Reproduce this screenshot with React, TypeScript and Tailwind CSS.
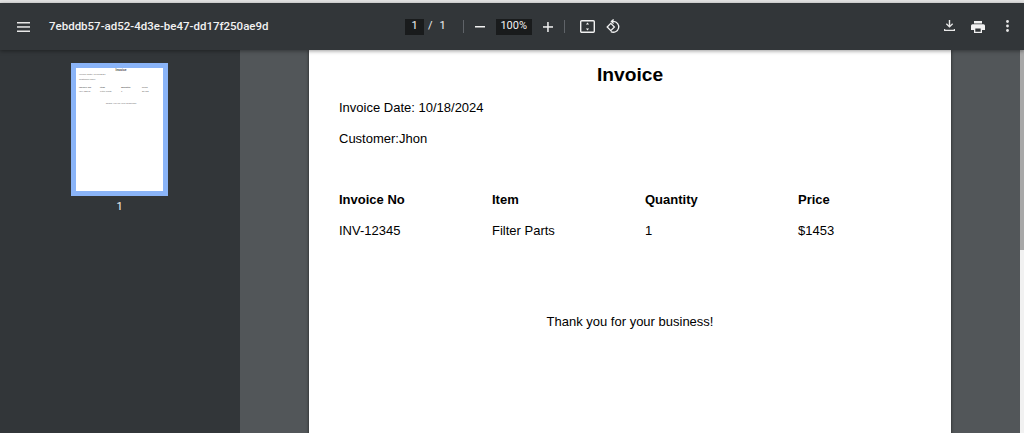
import React from "react";

const Row = ({ cells, bold }: { cells: string[]; bold?: boolean }) => (
  <div className={`flex ${bold ? "font-bold" : ""}`}>
    {cells.map((c) => (
      <div key={c} className="w-[153px]">{c}</div>
    ))}
  </div>
);

export default function App() {
  return (
    <div className="w-[1024px] h-[433px] overflow-hidden flex flex-col bg-[#525659] font-['Liberation_Sans',sans-serif]">
      <div className="h-[3px] shrink-0 bg-[#e4e4e4]" />
      <header className="relative z-10 h-[47px] shrink-0 flex items-center bg-[#323639] text-[#f1f1f1] shadow-[0_1px_4px_rgba(0,0,0,0.4)]">
        <svg className="ml-[17px] w-[13px] h-[10px]" viewBox="0 0 13 10" fill="#e8e8e8">
          <rect y="0" width="13" height="1.5" />
          <rect y="4.2" width="13" height="1.5" />
          <rect y="8.5" width="13" height="1.5" />
        </svg>
        <div className="ml-[19px] w-[356px] text-[11.5px] font-medium font-['Roboto',sans-serif]">7ebddb57-ad52-4d3e-be47-dd17f250ae9d</div>
        <div className="flex items-center text-[11px] font-['Roboto',sans-serif]">
          <div className="w-[19px] h-[16px] bg-[#191b1c] flex items-center justify-center">1</div>
          <span className="ml-[4px]">/</span>
          <span className="ml-[7px]">1</span>
          <div className="ml-[17px] w-px h-[13px] bg-[#5f6368]" />
          <svg className="ml-[11px] w-[10px] h-[2px]" viewBox="0 0 10 2" fill="#f1f1f1"><rect width="10" height="1.5" /></svg>
          <div className="ml-[11px] w-[36px] h-[16px] bg-[#191b1c] flex items-center justify-center">100%</div>
          <svg className="ml-[11px] w-[10px] h-[10px]" viewBox="0 0 10 10" fill="#f1f1f1"><rect y="4.2" width="10" height="1.5" /><rect x="4.2" width="1.5" height="10" /></svg>
          <div className="ml-[11px] w-px h-[13px] bg-[#5f6368]" />
          <svg className="ml-[15px] w-[15px] h-[13px]" viewBox="0 0 15 13" fill="none" stroke="#f1f1f1" strokeWidth="1.4">
            <rect x="0.7" y="0.7" width="13.6" height="11.6" rx="1" />
            <path d="M7.5 2.6l-1.6 2h3.2zM7.5 10.4l-1.6-2h3.2z" fill="#f1f1f1" stroke="none" />
          </svg>
          <svg className="ml-[11px] w-[15px] h-[15px]" viewBox="0 0 15 15" fill="none" stroke="#f1f1f1" strokeWidth="1.3">
            <path d="M1.2 8l3.6-3.6L8.4 8l-3.6 3.6z" />
            <path d="M5.5 2.4h2a5.4 5.4 0 1 1-2.6 10.2" />
            <path d="M7.6 0.4L5.4 2.4l2.2 2" />
          </svg>
        </div>
        <svg className="absolute left-[944px] top-[17px] w-[11px] h-[11px]" viewBox="0 0 11 11" fill="#e8e8e8">
          <path d="M4.8 0h1.4v5.2l2-1.9.9.9-3.6 3.5-3.6-3.5.9-.9 2 1.9zM0 9h1.2v.8h8.6V9H11v2H0z" />
        </svg>
        <svg className="absolute left-[971px] top-[18px] w-[14px] h-[12px]" viewBox="0 0 14 12" fill="#f1f1f1">
          <path fillRule="evenodd" d="M3 0h8v2.6H3zM1.5 3.2h11A1.5 1.5 0 0 1 14 4.7V9h-3v3H3V9H0V4.7a1.5 1.5 0 0 1 1.5-1.5zM4.3 7.4v3.4h5.4V7.4z" />
        </svg>
        <svg className="absolute left-[1006px] top-[17px] w-[3px] h-[12px]" viewBox="0 0 3 12" fill="#e8e8e8">
          <circle cx="1.5" cy="1.5" r="1.4" /><circle cx="1.5" cy="6" r="1.4" /><circle cx="1.5" cy="10.5" r="1.4" />
        </svg>
      </header>
      <div className="flex-1 min-h-0 flex">
        <aside className="w-[240px] shrink-0 bg-[#323639] flex flex-col items-center pt-[13px] pr-px">
          <div className="w-[97px] h-[133px] bg-[#8ab4f8] p-[5px]">
            <div className="w-full h-full bg-white pt-[1px] pl-[3px] text-[2.4px] leading-[3px] text-[#666]">
              <div className="text-center font-bold text-[3.2px] text-[#444]">Invoice</div>
              <div className="mt-[1px]">Invoice Date: 10/18/2024</div>
              <div className="mt-[1.5px]">Customer:Jhon</div>
              <div className="mt-[5.5px] flex font-bold"><span className="w-[21px]">Invoice No</span><span className="w-[21px]">Item</span><span className="w-[21px]">Quantity</span><span>Price</span></div>
              <div className="mt-[1px] flex"><span className="w-[21px]">INV-12345</span><span className="w-[21px]">Filter Parts</span><span className="w-[21px]">1</span><span>$1453</span></div>
              <div className="mt-[9px] text-center">Thank you for your business!</div>
            </div>
          </div>
          <div className="mt-[3px] text-[11px] text-[#f1f1f1] font-['Roboto',sans-serif]">1</div>
        </aside>
        <main className="flex-1 min-w-0 pl-[69px]">
          <div className="relative w-[642px] h-[500px] bg-white shadow-[0_0_3px_rgba(0,0,0,0.6)] pl-[30px] text-[13px] text-black leading-[16px]">
            <div className="pr-[30px] pt-[13px] text-center text-[19.2px] leading-[23px] font-bold">Invoice</div>
            <div className="mt-[14px]">Invoice Date: 10/18/2024</div>
            <div className="mt-[15px]">Customer:Jhon</div>
            <div className="mt-[45px]"><Row bold cells={["Invoice No", "Item", "Quantity", "Price"]} /></div>
            <div className="mt-[15px]"><Row cells={["INV-12345", "Filter Parts", "1", "$1453"]} /></div>
            <div className="mt-[75px] pr-[30px] text-center">Thank you for your business!</div>
          </div>
        </main>
        <div className="w-[4px] shrink-0 flex flex-col bg-[#f1f1f1]">
          <div className="h-[200px] bg-[#a8a8a8]" />
        </div>
      </div>
    </div>
  );
}
